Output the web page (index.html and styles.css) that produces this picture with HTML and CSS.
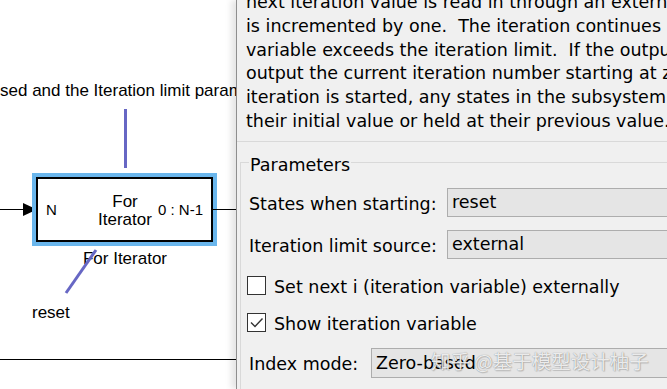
FILE: index.html
```html
<!DOCTYPE html>
<html lang="en">
<head>
<meta charset="utf-8">
<title>For Iterator</title>
<link rel="stylesheet" href="styles.css">
</head>
<body>
<div class="screen">
  <div class="canvas">
    <svg class="diagram" width="236" height="389" viewBox="0 0 236 389">
      <text class="dtext" x="0" y="96">sed and the Iteration limit parameter</text>
      <line class="sig" x1="125.5" y1="109" x2="125.5" y2="168"/>
      <line class="wire" x1="0" y1="209.5" x2="24" y2="209.5"/>
      <polygon class="arrow" points="23,203 37,209.5 23,216"/>
      <rect class="halo" x="34" y="175" width="181" height="69"/>
      <rect class="block" x="37" y="178" width="175" height="63"/>
      <line class="wire" x1="213" y1="209.5" x2="236" y2="209.5"/>
      <text class="dtext port" x="46" y="215">N</text>
      <text class="dtext" x="125" y="207" text-anchor="middle">For</text>
      <text class="dtext" x="125" y="225" text-anchor="middle">Iterator</text>
      <text class="dtext port" x="203" y="215" text-anchor="end">0 : N-1</text>
      <text class="dtext" x="125" y="264" text-anchor="middle">For Iterator</text>
      <line class="sig" x1="96" y1="250" x2="66" y2="293"/>
      <text class="dtext" x="32" y="318">reset</text>
      <line class="wire" x1="0" y1="359.5" x2="236" y2="359.5"/>
    </svg>
  </div>
  <div class="panel">
    <div class="desc">
      <div class="line">next iteration value is read in through an external input, or</div>
      <div class="line">is incremented by one.  The iteration continues until the iteration</div>
      <div class="line">variable exceeds the iteration limit.  If the output port is shown, it will</div>
      <div class="line">output the current iteration number starting at zero or one.  When an</div>
      <div class="line">iteration is started, any states in the subsystem are either reset to</div>
      <div class="line">their initial value or held at their previous value.</div>
    </div>
    <fieldset class="params">
      <legend class="legend">Parameters</legend>
      <div class="rows">
        <div class="row">
          <span class="lbl lbl-wide">States when starting:</span>
          <div class="combo">reset</div>
        </div>
        <div class="row">
          <span class="lbl lbl-wide">Iteration limit source:</span>
          <div class="combo">external</div>
        </div>
        <div class="check check-first">
          <span class="box"></span>
          <span class="lbl">Set next i (iteration variable) externally</span>
        </div>
        <div class="check">
          <span class="box">
            <svg class="tick" width="17" height="17" viewBox="0 0 17 17"><polyline points="3,8.5 7,12.5 14.5,4.5"/></svg>
          </span>
          <span class="lbl">Show iteration variable</span>
        </div>
        <div class="row row-index">
          <span class="lbl lbl-short">Index mode:</span>
          <div class="combo">Zero-based</div>
        </div>
      </div>
    </fieldset>
  </div>
  <div class="watermark">知乎 @基于模型设计柚子</div>
</div>
</body>
</html>
```

FILE: styles.css
```css
html, body {
  margin: 0;
  padding: 0;
}

body {
  width: 667px;
  height: 389px;
  overflow: hidden;
  background: #ffffff;
}

.screen {
  position: relative;
  display: flex;
  width: 667px;
  height: 389px;
  overflow: hidden;
}

/* ---------- diagram canvas ---------- */
.canvas {
  flex: 0 0 236px;
  height: 389px;
  background: #ffffff;
}

.diagram {
  display: block;
}

.dtext {
  font-family: "Liberation Sans", Arial, sans-serif;
  font-size: 17px;
  fill: #000000;
}

.port {
  font-size: 15px;
}

.sig {
  stroke: #6767c4;
  stroke-width: 3;
}

.wire {
  stroke: #000000;
  stroke-width: 1;
}

.arrow {
  fill: #000000;
}

.halo {
  fill: none;
  stroke: #6ab6ec;
  stroke-width: 4;
}

.block {
  fill: #ffffff;
  stroke: #000000;
  stroke-width: 2;
}

/* ---------- dialog panel ---------- */
.panel {
  position: relative;
  z-index: 1;
  flex: 0 0 520px;
  background: #f0f0f0;
  border-left: 1px solid #8e8e8e;
  box-shadow: -5px 0 6px rgba(0, 0, 0, 0.10);
  font-family: "DejaVu Sans", sans-serif;
  font-size: 17.5px;
  color: #000000;
}

.desc {
  margin-top: -9px;
  padding: 0 0 7px 9px;
  border-bottom: 1px solid #d9d9d9;
  line-height: 23.75px;
  overflow: hidden;
}

.line {
  white-space: pre;
}

.params {
  margin: 7px 0 0 3px;
  padding: 11px 0 40px 8px;
  border: 1px solid #d9d9d9;
  min-inline-size: 0;
}

.legend {
  padding: 4px 1px 0;
  line-height: 24px;
}

.rows {
  display: flex;
  flex-direction: column;
  gap: 13px;
}

.row {
  display: flex;
  align-items: center;
  height: 29px;
}

.lbl {
  line-height: 24px;
  padding-top: 3px;
  white-space: nowrap;
}

.lbl-wide {
  flex: 0 0 198px;
}

.lbl-short {
  flex: 0 0 122px;
}

.combo {
  flex: 1;
  box-sizing: border-box;
  height: 29px;
  padding-left: 4px;
  border: 1px solid #adadad;
  background: #e5e5e5;
  line-height: 27px;
  white-space: nowrap;
}

.row-index {
  height: 30px;
}

.row-index .combo {
  height: 30px;
  line-height: 28px;
}

.check {
  display: flex;
  align-items: center;
  gap: 8px;
  height: 24px;
  margin-left: -2px;
}

.check-first {
  margin-top: 2px;
}

.box {
  flex: none;
  box-sizing: border-box;
  width: 19px;
  height: 19px;
  border: 1px solid #333333;
  background: #ffffff;
  display: flex;
}

.tick polyline {
  fill: none;
  stroke: #333333;
  stroke-width: 1.4;
}

/* ---------- watermark overlay ---------- */
.watermark {
  position: absolute;
  left: 431px;
  top: 346px;
  z-index: 2;
  font-family: "Noto Sans CJK SC", sans-serif;
  font-size: 19.5px;
  line-height: 30px;
  color: rgba(255, 255, 255, 0.85);
  text-shadow: 0 0 1px rgba(0, 0, 0, 0.45), 1px 1px 1px rgba(0, 0, 0, 0.15);
  white-space: nowrap;
  pointer-events: none;
}
```
